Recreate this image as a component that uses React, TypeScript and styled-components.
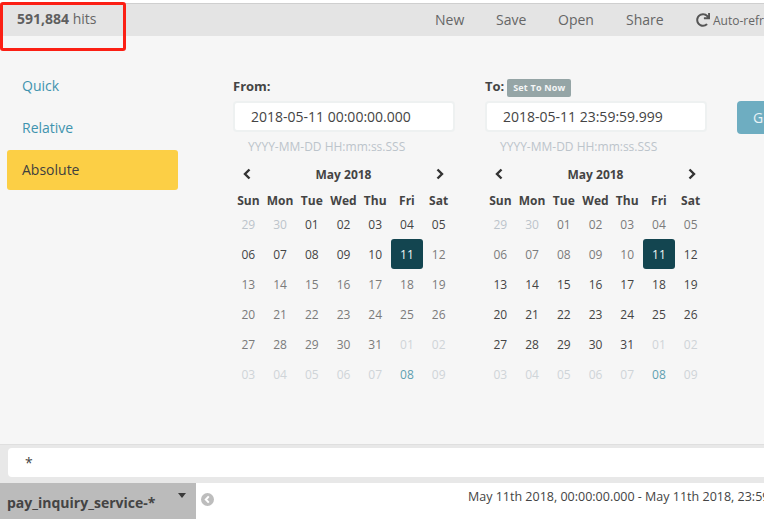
import React from "react";
import styled, { createGlobalStyle } from "styled-components";
import { FaRedo } from "react-icons/fa";

const Global = createGlobalStyle`
  html, body { margin: 0; padding: 0; background: #fff; }
  body { font-family: "Open Sans", "Liberation Sans", sans-serif; }
  * { box-sizing: border-box; }
`;

const Page = styled.div`
  position: relative;
  width: 764px;
  height: 519px;
  overflow: hidden;
  display: flex;
  flex-direction: column;
  background: #fff;
`;

const Toolbar = styled.div`
  margin-top: 3px;
  height: 33px;
  flex: none;
  width: 900px;
  display: flex;
  align-items: center;
  background: #e4e4e4;
  border-top: 1px solid #cfcfcf;
  color: #666;
`;

const Hits = styled.div`
  width: 435px;
  padding: 0 0 3px 17px;
  font-size: 14px;
  color: #666;
  b { font-weight: 700; color: #5f5f5f; }
`;

const NavItem = styled.span<{ $w: number }>`
  width: ${(p) => p.$w}px;
  flex: none;
  font-size: 14px;
  color: #666;
  padding-bottom: 1px;
`;

const Refresh = styled.span`
  display: flex;
  align-items: center;
  gap: 3px;
  font-size: 12px;
  color: #666;
  white-space: nowrap;
  svg { flex: none; color: #555; }
`;

const Body = styled.div`
  flex: none;
  height: 408px;
  background: #f6f6f6;
  display: flex;
  padding: 30px 0 0 7px;
`;

const Sidebar = styled.div`
  width: 171px;
  flex: none;
  display: flex;
  flex-direction: column;
  gap: 2px;
`;

const Mode = styled.div<{ $active?: boolean }>`
  height: 40px;
  display: flex;
  align-items: center;
  padding: 0 0 2px 15px;
  font-size: 14px;
  border-radius: 3px;
  color: ${(p) => (p.$active ? "#3f3f3f" : "#3f93ae")};
  background: ${(p) => (p.$active ? "#fccf45" : "transparent")};
`;

const Pickers = styled.div`
  margin-left: 54px;
  display: flex;
  flex: none;
`;

const Picker = styled.div`
  width: 252px;
  flex: none;
  display: flex;
  flex-direction: column;
`;

const LabelRow = styled.div`
  height: 35px;
  display: flex;
  align-items: flex-start;
  gap: 3px;
  padding: 11px 0 0 1px;
  font-size: 13px;
  font-weight: 700;
  color: #444;
  line-height: 18px;
`;

const NowButton = styled.span`
  margin-top: 2px;
  height: 18px;
  width: 64px;
  display: flex;
  align-items: center;
  justify-content: center;
  font-size: 9px;
  letter-spacing: 0.2px;
  font-weight: 700;
  color: #f4f6f6;
  background: #95a5a6;
  border-radius: 2px;
`;

const DateInput = styled.div`
  margin-left: 1px;
  width: 222px;
  height: 31px;
  display: flex;
  align-items: center;
  padding-left: 16px;
  font-size: 14px;
  color: #444;
  background: #fff;
  border: 2px solid #eef1f1;
  border-radius: 4px;
`;

const Hint = styled.div`
  margin: 5px 0 0 16px;
  height: 19px;
  line-height: 19px;
  font-size: 12px;
  color: #bcc4cb;
  white-space: nowrap;
`;

const CalHeader = styled.div`
  margin-top: 8px;
  width: 222px;
  height: 20px;
  display: flex;
  align-items: center;
  justify-content: space-between;
  padding: 0 9px 0 10px;
  font-size: 12px;
  font-weight: 700;
  color: #444;
`;

const Grid = styled.div`
  margin: 7px 0 0 0.5px;
  width: 222px;
  display: grid;
  grid-template-columns: repeat(7, 1fr);
  grid-template-rows: 18px;
  grid-auto-rows: 30px;
`;

const Weekday = styled.div`
  text-align: center;
  font-size: 12px;
  line-height: 20px;
  font-weight: 700;
  color: #444;
`;

type Tone = "muted" | "dark" | "mid" | "faint" | "link" | "selected";
const toneColor: Record<Tone, string> = {
  muted: "#bcc4cb",
  dark: "#444",
  mid: "#7b7b7b",
  faint: "#cfd4d8",
  link: "#5f9fb0",
  selected: "#f2f6f6",
};

const Day = styled.div<{ $tone: Tone }>`
  display: flex;
  align-items: center;
  justify-content: center;
  font-size: 12px;
  border-radius: 3px;
  color: ${(p) => toneColor[p.$tone]};
  background: ${(p) => (p.$tone === "selected" ? "#134550" : "transparent")};
`;

const GoButton = styled.div`
  width: 70px;
  height: 33px;
  margin-top: 35px;
  margin-left: 1px;
  flex: none;
  display: flex;
  align-items: center;
  padding-left: 16px;
  font-size: 14px;
  color: #eaf3f6;
  background: #6eadc1;
  border-radius: 4px;
`;

const SearchBar = styled.div`
  flex: none;
  height: 39px;
  padding: 3px 0 6px 8px;
  background: #e8e8e8;
  border-top: 1px solid #dfdfdf;
`;

const SearchInput = styled.div`
  height: 100%;
  padding-left: 17px;
  font-size: 14px;
  line-height: 29px;
  color: #444;
  background: #fff;
  border-radius: 4px 0 0 4px;
`;

const Bottom = styled.div`
  flex: 1;
  display: flex;
  min-height: 0;
`;

const IndexName = styled.div`
  position: relative;
  width: 196px;
  flex: none;
  background: #bbb;
  padding: 10px 0 0 7px;
  font-size: 14px;
  line-height: 20px;
  font-weight: 700;
  color: #444;
`;

const Caret = styled.span`
  position: absolute;
  top: 10px;
  left: 178px;
  border-left: 4.5px solid transparent;
  border-right: 4.5px solid transparent;
  border-top: 5px solid #3a3a3a;
`;

const Collapse = styled.div`
  width: 272px;
  flex: none;
  padding: 10px 0 0 5px;
  line-height: 0;
`;

const Range = styled.div`
  padding-top: 5px;
  font-size: 12.5px;
  line-height: 17px;
  color: #444;
  white-space: nowrap;
`;

const Annotation = styled.div`
  position: absolute;
  left: 0;
  top: 2px;
  width: 126px;
  height: 49px;
  border: 3px solid #fb1f14;
  border-radius: 3px;
  pointer-events: none;
`;

const Chevron = ({ right }: { right?: boolean }) => (
  <svg width="10" height="12" viewBox="0 0 10 12" aria-hidden="true">
    <path
      d={right ? "M2.5 1.5 7 6l-4.5 4.5" : "M7.5 1.5 3 6l4.5 4.5"}
      fill="none"
      stroke="#333"
      strokeWidth="2.4"
    />
  </svg>
);

const weekdays = ["Sun", "Mon", "Tue", "Wed", "Thu", "Fri", "Sat"];

const makeDays = (dim: boolean): { text: string; tone: Tone }[] => {
  const rows: [string, Tone][] = [];
  const add = (t: string, tone: Tone) => rows.push([t, tone]);
  add("29", "muted");
  add("30", "muted");
  ["01", "02", "03", "04", "05"].forEach((d) => add(d, dim ? "mid" : "dark"));
  ["06", "07", "08", "09", "10"].forEach((d) => add(d, dim ? "mid" : "dark"));
  add("11", "selected");
  add("12", dim ? "dark" : "mid");
  for (let d = 13; d <= 31; d++) add(String(d), dim ? "dark" : "mid");
  add("01", "faint");
  add("02", "faint");
  ["03", "04", "05", "06", "07"].forEach((d) => add(d, "faint"));
  add("08", "link");
  add("09", "faint");
  return rows.map(([text, tone]) => ({ text, tone }));
};

const Calendar = ({ dim }: { dim: boolean }) => (
  <>
    <CalHeader>
      <Chevron />
      <span>May 2018</span>
      <Chevron right />
    </CalHeader>
    <Grid>
      {weekdays.map((d) => (
        <Weekday key={d}>{d}</Weekday>
      ))}
      {makeDays(dim).map((d, i) => (
        <Day key={i} $tone={d.tone}>
          {d.text}
        </Day>
      ))}
    </Grid>
  </>
);

export default function App() {
  return (
    <Page>
      <Global />
      <Toolbar>
        <Hits>
          <b>591,884</b> hits
        </Hits>
        <NavItem $w={61}>New</NavItem>
        <NavItem $w={62}>Save</NavItem>
        <NavItem $w={68}>Open</NavItem>
        <NavItem $w={70}>Share</NavItem>
        <Refresh>
          <FaRedo size={14} />
          Auto-refresh
        </Refresh>
      </Toolbar>
      <Body>
        <Sidebar>
          <Mode>Quick</Mode>
          <Mode>Relative</Mode>
          <Mode $active>Absolute</Mode>
        </Sidebar>
        <Pickers>
          <Picker>
            <LabelRow>From:</LabelRow>
            <DateInput>2018-05-11 00:00:00.000</DateInput>
            <Hint>YYYY-MM-DD HH:mm:ss.SSS</Hint>
            <Calendar dim={false} />
          </Picker>
          <Picker>
            <LabelRow>
              To: <NowButton>Set To Now</NowButton>
            </LabelRow>
            <DateInput>2018-05-11 23:59:59.999</DateInput>
            <Hint>YYYY-MM-DD HH:mm:ss.SSS</Hint>
            <Calendar dim />
          </Picker>
          <GoButton>Go</GoButton>
        </Pickers>
      </Body>
      <SearchBar>
        <SearchInput>*</SearchInput>
      </SearchBar>
      <Bottom>
        <IndexName>
          pay_inquiry_service-*
          <Caret />
        </IndexName>
        <Collapse>
          <svg width="13" height="13" viewBox="0 0 13 13" aria-hidden="true">
            <circle cx="6.5" cy="6.5" r="6.5" fill="#bdbdbd" />
            <path d="M7.8 3.4 4.8 6.5l3 3.1" fill="none" stroke="#fff" strokeWidth="2" />
          </svg>
        </Collapse>
        <Range>May 11th 2018, 00:00:00.000 - May 11th 2018, 23:59:59.999</Range>
      </Bottom>
      <Annotation />
    </Page>
  );
}
